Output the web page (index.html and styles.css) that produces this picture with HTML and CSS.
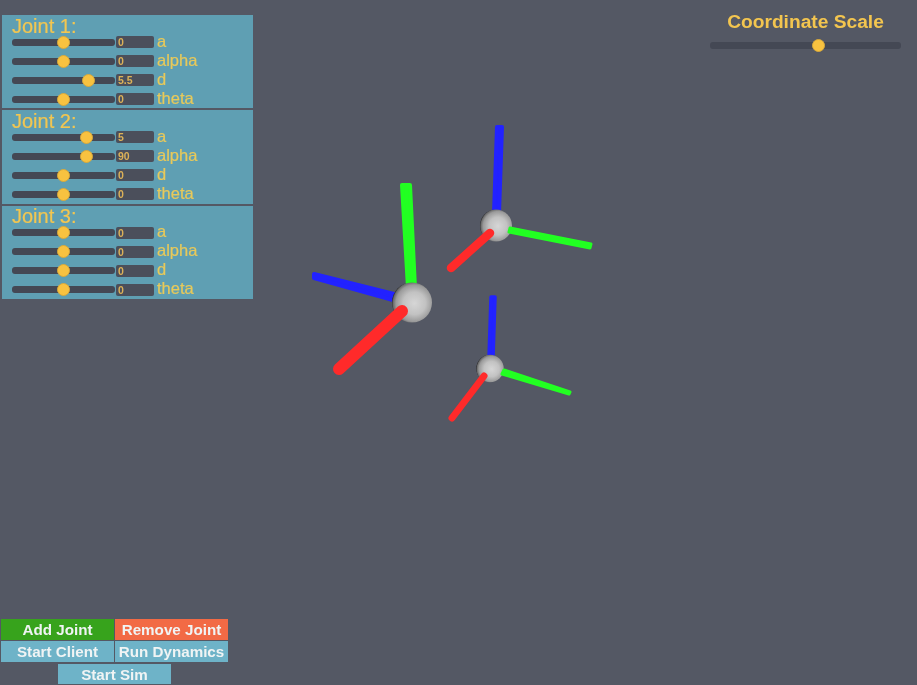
FILE: index.html
```html
<!DOCTYPE html>
<html lang="en">
<head>
<meta charset="utf-8">
<title>Robot Arm Simulator</title>
<link rel="stylesheet" href="styles.css">
</head>
<body>
<svg class="scene" viewBox="0 0 917 685" aria-hidden="true">
  <defs>
    <radialGradient id="ball" cx="0.56" cy="0.52" r="0.56">
      <stop offset="0" stop-color="#d6d6d6"/>
      <stop offset="0.5" stop-color="#c2c2c2"/>
      <stop offset="0.82" stop-color="#9a9a9a"/>
      <stop offset="0.95" stop-color="#6a6a6a"/>
      <stop offset="1" stop-color="#2c2c2c"/>
    </radialGradient>
  </defs>
  <polygon class="axis-blue" points="314,274 314,278 393,300 394,294" stroke-width="4"/>
  <polygon class="axis-green" points="402,185 410,185 415,288 408,288" stroke-width="4"/>
  <circle cx="412" cy="302.500" r="20" fill="url(#ball)"/>
  <line class="axis-red" x1="402" y1="311" x2="339" y2="369" stroke-width="12"/>

  <polygon class="axis-blue" points="497,127 502,127 499,213 494,213" stroke-width="4"/>
  <circle cx="496" cy="225.500" r="16" fill="url(#ball)"/>
  <polygon class="axis-green" points="510,228 591,244 590,248 509,232" stroke-width="3"/>
  <line class="axis-red" x1="490" y1="233" x2="451" y2="268" stroke-width="8.500"/>

  <polygon class="axis-blue" points="491,297 495,297 493,358 489,358" stroke-width="3.500"/>
  <circle cx="490" cy="368.500" r="13.700" fill="url(#ball)"/>
  <polygon class="axis-green" points="504,370 570,392 569,394 502,374" stroke-width="3"/>
  <line class="axis-red" x1="484" y1="376" x2="452" y2="418" stroke-width="7"/>
</svg>

<main class="hud">
  <div class="top">
    <section class="joints">
      <div class="joint">
        <h2 class="joint-title">Joint 1:</h2>
        <div class="param"><input class="slider" type="range" min="-10" max="10" step="0.5" value="0"><span class="value">0</span><span class="name">a</span></div>
        <div class="param"><input class="slider" type="range" min="-10" max="10" step="0.5" value="0"><span class="value">0</span><span class="name">alpha</span></div>
        <div class="param"><input class="slider" type="range" min="-10" max="10" step="0.5" value="5.5"><span class="value">5.5</span><span class="name">d</span></div>
        <div class="param"><input class="slider" type="range" min="-10" max="10" step="0.5" value="0"><span class="value">0</span><span class="name">theta</span></div>
      </div>
      <div class="joint">
        <h2 class="joint-title">Joint 2:</h2>
        <div class="param"><input class="slider" type="range" min="-10" max="10" step="0.5" value="5"><span class="value">5</span><span class="name">a</span></div>
        <div class="param"><input class="slider" type="range" min="-180" max="180" step="1" value="90"><span class="value">90</span><span class="name">alpha</span></div>
        <div class="param"><input class="slider" type="range" min="-10" max="10" step="0.5" value="0"><span class="value">0</span><span class="name">d</span></div>
        <div class="param"><input class="slider" type="range" min="-10" max="10" step="0.5" value="0"><span class="value">0</span><span class="name">theta</span></div>
      </div>
      <div class="joint">
        <h2 class="joint-title">Joint 3:</h2>
        <div class="param"><input class="slider" type="range" min="-10" max="10" step="0.5" value="0"><span class="value">0</span><span class="name">a</span></div>
        <div class="param"><input class="slider" type="range" min="-10" max="10" step="0.5" value="0"><span class="value">0</span><span class="name">alpha</span></div>
        <div class="param"><input class="slider" type="range" min="-10" max="10" step="0.5" value="0"><span class="value">0</span><span class="name">d</span></div>
        <div class="param"><input class="slider" type="range" min="-10" max="10" step="0.5" value="0"><span class="value">0</span><span class="name">theta</span></div>
      </div>
    </section>
    <section class="scale">
      <div class="scale-title">Coordinate Scale</div>
      <input class="slider slider-wide" type="range" min="0" max="100" value="57.5" step="0.5">
    </section>
  </div>
  <div class="actions">
    <button class="btn btn-add">Add Joint</button>
    <button class="btn btn-remove">Remove Joint</button>
    <button class="btn">Start Client</button>
    <button class="btn">Run Dynamics</button>
    <button class="btn btn-sim">Start Sim</button>
  </div>
</main>
</body>
</html>
```

FILE: styles.css
```css
* { box-sizing: border-box; }
html, body { margin: 0; height: 100%; overflow: hidden; }
body {
  background: #545864;
  font-family: "Liberation Sans", Arial, sans-serif;
  position: relative;
}
.scene { position: absolute; inset: 0; width: 917px; height: 685px; filter: blur(0.6px); }
.scene polygon { stroke-linejoin: round; }
.scene line { stroke-linecap: round; }
.axis-red { fill: #ff2a2a; stroke: #ff2a2a; }
.axis-green { fill: #22ff22; stroke: #22ff22; }
.axis-blue { fill: #2222ff; stroke: #2222ff; }

.hud {
  position: relative;
  height: 685px;
  display: flex;
  flex-direction: column;
  justify-content: space-between;
  filter: blur(0.4px);
}
.top { display: flex; justify-content: space-between; align-items: flex-start; padding-top: 15px; }
.joints { display: flex; flex-direction: column; gap: 2px; margin-left: 2px; width: 251px; }
.joint { background: #5f9fb3; height: 93.400px; padding: 3.500px 0 0 10px; }
.joint-title {
  margin: 0;
  font-size: 20px;
  font-weight: 400;
  line-height: 14px;
  -webkit-text-stroke: 0.2px #f2c651;
  color: #f2c651;
}
.param { display: flex; align-items: center; height: 19px; }
.slider {
  -webkit-appearance: none;
  appearance: none;
  width: 103px;
  height: 7px;
  margin: 0;
  background: #444854;
  border-radius: 3px;
  outline: none;
}
.slider::-webkit-slider-thumb {
  -webkit-appearance: none;
  appearance: none;
  width: 13px;
  height: 13px;
  border-radius: 50%;
  background: #f8c240;
  border: 1px solid #d9a93a;
}
.value {
  width: 38px;
  height: 12px;
  margin-left: 1px;
  padding: 0 0 0 2px;
  background: #4b4f5b;
  border-radius: 2px;
  color: #dcb158;
  font-size: 10.500px;
  font-weight: 700;
  line-height: 13px;
}
.name {
  margin-left: 3px;
  position: relative;
  top: -1px;
  color: #e8c95a;
  font-size: 16.500px;
  line-height: 17px;
  -webkit-text-stroke: 0.2px #e8c95a;
}

.scale { width: 191px; margin-right: 16px; display: flex; flex-direction: column; align-items: center; }
.scale-title { color: #f3c54f; font-size: 19.200px; font-weight: 700; line-height: 14px; white-space: nowrap; margin-bottom: 13px; }
.slider-wide { width: 191px; }

.actions {
  display: grid;
  grid-template-columns: 113px 113px;
  grid-auto-rows: 21px;
  column-gap: 1px;
  row-gap: 1px;
  width: 229px;
  margin: 0 0 1px 1px;
}
.btn {
  border: 0;
  padding: 0;
  background: #6eb3c8;
  color: #f0f4f4;
  font-family: inherit;
  font-size: 15.200px;
  font-weight: 700;
  line-height: 21px;
}
.btn-add { background: #37a31c; }
.btn-remove { background: #f26a45; }
.btn-sim { grid-column: 1 / span 2; justify-self: center; width: 113px; margin-top: 1px; }
```
